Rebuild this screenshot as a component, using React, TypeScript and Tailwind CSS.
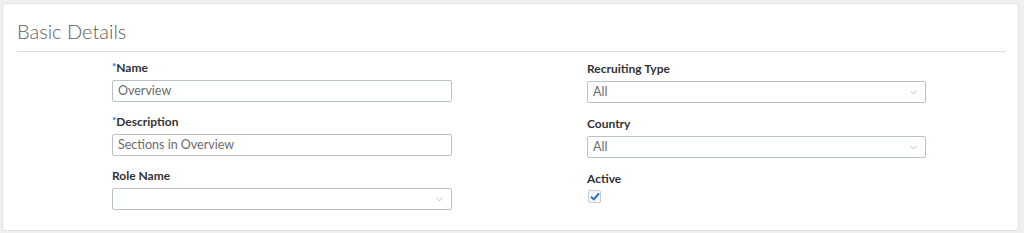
import { ChevronDown } from "lucide-react";

const font = { fontFamily: 'Lato, "Open Sans", sans-serif' };

function Label({ text, required }: { text: string; required?: boolean }) {
  return (
    <label className="block h-4 text-[12px] leading-4 font-bold text-[#333]">
      {required && <span className="text-[#0a6ed1] text-[10px] align-top leading-3">*</span>}
      {text}
    </label>
  );
}

function TextInput({ value }: { value: string }) {
  return (
    <div className="mt-1 h-[22px] border border-[#b8c2cb] rounded-[2px] bg-white px-[5px] flex items-center text-[12.5px] text-[#6b6b6b]">
      {value}
    </div>
  );
}

function Select({ value }: { value: string }) {
  return (
    <div className="mt-1 h-[22px] border border-[#b8c2cb] rounded-[2px] bg-white pl-[5px] pr-[6px] flex items-center justify-between text-[12.5px] text-[#6b6b6b]">
      <span>{value}</span>
      <ChevronDown size={11} strokeWidth={1.5} className="text-[#9aa3ab]" />
    </div>
  );
}

export default function App() {
  return (
    <div className="w-[1024px] h-[233px] bg-[#efefef] pt-[3px] pl-[2px]" style={font}>
      <div className="w-[1017px] h-[228px] bg-white rounded-[4px] border border-[#e2e2e2] pl-[14px] pr-[12px]">
        <h2 className="pt-[15px] h-[47px] text-[20px] leading-6 font-light text-[#5e5e5e]">Basic Details</h2>
        <div className="border-t border-[#dcdcdc]" />
        <div className="flex pl-[95px] pt-[8px]">
          {/* left column */}
          <div className="w-[340px]">
            <div className="mb-3">
              <Label text="Name" required />
              <TextInput value="Overview" />
            </div>
            <div className="mb-3">
              <Label text="Description" required />
              <TextInput value="Sections in Overview" />
            </div>
            <div>
              <Label text="Role Name" />
              <Select value="" />
            </div>
          </div>
          {/* right column */}
          <div className="w-[339px] ml-[135px] pt-[1px]">
            <div className="mb-[13px]">
              <Label text="Recruiting Type" />
              <Select value="All" />
            </div>
            <div className="mb-[13px]">
              <Label text="Country" />
              <Select value="All" />
            </div>
            <div>
              <Label text="Active" />
              <div className="mt-[3px] w-[13px] h-[13px] ml-[1px] border border-[#c5ccd3] rounded-[2px] bg-[#f4f6f8] flex items-center justify-center">
                <svg width="10" height="9" viewBox="0 0 10 9">
                  <path d="M1 4.8 L3.8 7.4 L9 1.4" fill="none" stroke="#1f73c9" strokeWidth="2" />
                </svg>
              </div>
            </div>
          </div>
        </div>
      </div>
    </div>
  );
}
